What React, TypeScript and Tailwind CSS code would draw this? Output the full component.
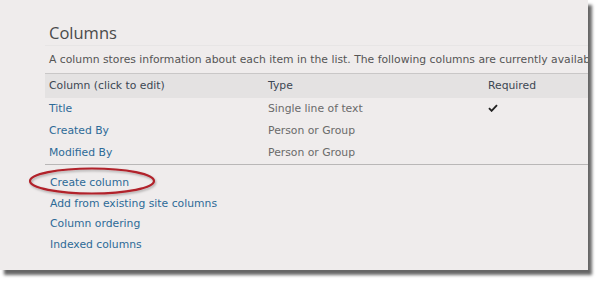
import React from "react";

const links = ["Create column", "Add from existing site columns", "Column ordering", "Indexed columns"];
const rows = [
  { name: "Title", type: "Single line of text", req: true },
  { name: "Created By", type: "Person or Group", req: false },
  { name: "Modified By", type: "Person or Group", req: false },
];

export default function App() {
  return (
    <div className="w-[600px] h-[282px] bg-white overflow-hidden" style={{ fontFamily: '"DejaVu Sans", Verdana, sans-serif' }}>
      <div className="relative w-[588px] h-[270px] bg-[#efecec] shadow-[4px_5px_3px_rgba(0,0,0,0.6)] overflow-hidden">
        <div className="pt-[20px]">
          <div className="h-[25px] leading-[25px] pl-[49px] text-[16.5px] text-[#4a4a4a]" style={{ fontFamily: '"Open Sans", sans-serif' }}>
            Columns
          </div>
          <div className="ml-[45px] border-b border-[#e7e5e5]" />
          <div className="h-[27px] leading-[27px] pl-[49px] text-[10.8px] text-[#555] whitespace-nowrap">
            A column stores information about each item in the list. The following columns are currently available in this list:
          </div>
          <div className="ml-[45px] border-t border-[#c9c7c7] bg-[#e4e2e2] h-[25px] flex items-center text-[10.8px] text-[#3c4753] whitespace-nowrap">
            <div className="w-[223px] pl-[4px]">Column (click to edit)</div>
            <div className="w-[220px]">Type</div>
            <div>Required</div>
          </div>
          {rows.map((r) => (
            <div key={r.name} className="ml-[45px] h-[22px] flex items-center text-[10.8px] whitespace-nowrap">
              <div className="w-[223px] pl-[4px] text-[#2d6a97]">{r.name}</div>
              <div className="w-[220px] text-[#6a6a6a]">{r.type}</div>
              <div>
                {r.req && (
                  <svg width="10" height="8" viewBox="0 0 10 8" className="block -mt-[2px]">
                    <path d="M1 4.2 L3.6 6.8 L9 1.2" fill="none" stroke="#222" strokeWidth="1.9" />
                  </svg>
                )}
              </div>
            </div>
          ))}
          <div className="ml-[45px] border-t border-[#b9b7b7]" />
          <div className="pt-[8px]">
            {links.map((l) => (
              <div key={l} className="h-[20.5px] leading-[20.5px] pl-[50px] text-[10.8px] text-[#2d6a97] whitespace-nowrap">
                {l}
              </div>
            ))}
          </div>
        </div>
        <svg className="absolute left-0 top-0" width="588" height="270">
          <defs>
            <filter id="sh" x="-10%" y="-30%" width="120%" height="180%">
              <feDropShadow dx="1" dy="1.5" stdDeviation="1" floodColor="#000" floodOpacity="0.3" />
            </filter>
          </defs>
          <ellipse cx="92" cy="181" rx="62" ry="12.5" fill="none" stroke="#b1202a" strokeWidth="2.2" filter="url(#sh)" />
        </svg>
      </div>
    </div>
  );
}
